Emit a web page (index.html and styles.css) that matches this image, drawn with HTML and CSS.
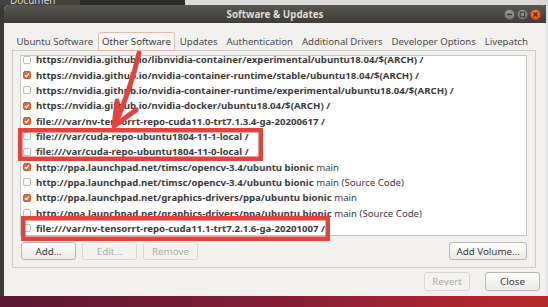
FILE: index.html
```html
<!DOCTYPE html>
<html>
<head>
<meta charset="utf-8">
<link rel="stylesheet" href="styles.css">
</head>
<body>
<div class="desktop">
  <div class="backdrop-top">
    <div class="bg-doc"><span class="doc-label">Documen</span></div>
    <div class="bg-dark"></div>
    <div class="bg-light"></div>
  </div>
  <div class="bg-left"></div>
  <div class="window">
    <div class="titlebar">
      <span class="title">Software &amp; Updates</span>
      <div class="controls">
        <span class="ctl"><svg width="7" height="7" viewBox="0 0 7 7"><path d="M1 3.5H6" stroke="#3c3b37" stroke-width="1.4"/></svg></span>
        <span class="ctl"><svg width="7" height="7" viewBox="0 0 7 7"><rect x="1.2" y="1.2" width="4.6" height="4.6" fill="none" stroke="#3c3b37" stroke-width="1.1"/></svg></span>
        <span class="ctl close"><svg width="7" height="7" viewBox="0 0 7 7"><path d="M1.5 1.5L5.5 5.5M5.5 1.5L1.5 5.5" stroke="#5a2210" stroke-width="1.3"/></svg></span>
      </div>
    </div>
    <div class="body">
      <div class="tabs">
        <span class="tab">Ubuntu Software</span>
        <span class="tab active">Other Software</span>
        <span class="tab">Updates</span>
        <span class="tab">Authentication</span>
        <span class="tab">Additional Drivers</span>
        <span class="tab">Developer Options</span>
        <span class="tab">Livepatch</span>
      </div>
      <div class="frame">
        <div class="list">
          <div class="rows">
            <div class="row"><span class="cb"></span><span class="label"><b>https://nvidia.github.io/libnvidia-container/experimental/ubuntu18.04/$(ARCH) /</b></span></div>
            <div class="row"><span class="cb on"><svg width="6" height="6" viewBox="0 0 6 6"><path d="M1 3.2L2.4 4.6L5 1.4" fill="none" stroke="#fff" stroke-width="1.3"/></svg></span><span class="label"><b>https://nvidia.github.io/nvidia-container-runtime/stable/ubuntu18.04/$(ARCH) /</b></span></div>
            <div class="row"><span class="cb"></span><span class="label"><b>https://nvidia.github.io/nvidia-container-runtime/experimental/ubuntu18.04/$(ARCH) /</b></span></div>
            <div class="row"><span class="cb on"><svg width="6" height="6" viewBox="0 0 6 6"><path d="M1 3.2L2.4 4.6L5 1.4" fill="none" stroke="#fff" stroke-width="1.3"/></svg></span><span class="label"><b>https://nvidia.github.io/nvidia-docker/ubuntu18.04/$(ARCH) /</b></span></div>
            <div class="row"><span class="cb on"><svg width="6" height="6" viewBox="0 0 6 6"><path d="M1 3.2L2.4 4.6L5 1.4" fill="none" stroke="#fff" stroke-width="1.3"/></svg></span><span class="label"><b>file:///var/nv-tensorrt-repo-cuda11.0-trt7.1.3.4-ga-20200617 /</b></span></div>
            <div class="row"><span class="cb"></span><span class="label"><b>file:///var/cuda-repo-ubuntu1804-11-1-local /</b></span></div>
            <div class="row"><span class="cb"></span><span class="label"><b>file:///var/cuda-repo-ubuntu1804-11-0-local /</b></span></div>
            <div class="row"><span class="cb on"><svg width="6" height="6" viewBox="0 0 6 6"><path d="M1 3.2L2.4 4.6L5 1.4" fill="none" stroke="#fff" stroke-width="1.3"/></svg></span><span class="label"><b>http://ppa.launchpad.net/timsc/opencv-3.4/ubuntu bionic</b> main</span></div>
            <div class="row"><span class="cb"></span><span class="label"><b>http://ppa.launchpad.net/timsc/opencv-3.4/ubuntu bionic</b> main (Source Code)</span></div>
            <div class="row"><span class="cb on"><svg width="6" height="6" viewBox="0 0 6 6"><path d="M1 3.2L2.4 4.6L5 1.4" fill="none" stroke="#fff" stroke-width="1.3"/></svg></span><span class="label"><b>http://ppa.launchpad.net/graphics-drivers/ppa/ubuntu bionic</b> main</span></div>
            <div class="row"><span class="cb"></span><span class="label"><b>http://ppa.launchpad.net/graphics-drivers/ppa/ubuntu bionic</b> main (Source Code)</span></div>
            <div class="row"><span class="cb"></span><span class="label"><b>file:///var/nv-tensorrt-repo-cuda11.1-trt7.2.1.6-ga-20201007 /</b></span></div>
          </div>
        </div>
        <div class="list-actions">
          <span class="btn">Add...</span>
          <span class="btn disabled">Edit...</span>
          <span class="btn disabled">Remove</span>
          <span class="spacer"></span>
          <span class="btn">Add Volume...</span>
        </div>
      </div>
      <div class="dialog-actions">
        <span class="btn dlg revert disabled">Revert</span>
        <span class="btn dlg close-btn">Close</span>
      </div>
    </div>
  </div>
  <div class="bg-right"></div>
  <div class="bg-bottom"></div>
  <svg class="annotations" width="548" height="307" viewBox="0 0 548 307">
    <rect x="20.25" y="130.25" width="240.5" height="28.5" fill="none" stroke="#e5413d" stroke-width="4.5"/>
    <rect x="23.25" y="218.25" width="304.5" height="20.5" fill="none" stroke="#e5413d" stroke-width="4.5"/>
    <path d="M139 53 Q131 88 115 125" fill="none" stroke="#e5413d" stroke-width="5" stroke-linecap="round"/>
    <path d="M117 101 L114 126 L136 110" fill="none" stroke="#e5413d" stroke-width="5" stroke-linecap="round" stroke-linejoin="round"/>
  </svg>
</div>
</body>
</html>
```

FILE: styles.css
```css
body {
  margin: 0;
}

.desktop {
  position: relative;
  width: 548px;
  height: 307px;
  overflow: hidden;
  display: grid;
  grid-template-columns: 4px 542px 2px;
  grid-template-rows: 5px 291px 11px;
  background: #3a3937;
  font-family: "Noto Sans", "DejaVu Sans", sans-serif;
}

.backdrop-top {
  grid-column: 1 / 4;
  display: flex;
}

.bg-doc {
  width: 80px;
  background: #42413e;
  overflow: hidden;
}

.doc-label {
  display: block;
  color: #d6d6d6;
  font-size: 10px;
  line-height: 10px;
  margin-top: -5px;
  padding-left: 10px;
}

.bg-dark {
  width: 105px;
  background: #2c2c2b;
}

.bg-light {
  flex: 1;
  background: #d9d9d8;
}

.bg-left {
  background: #3a3937;
}

.bg-right {
  background: #e2e2e2;
}

.bg-bottom {
  grid-column: 1 / 4;
  background: linear-gradient(90deg, #5c1833 0%, #7e1c36 45%, #a72530 80%, #b42a2c 100%);
}

.window {
  display: flex;
  flex-direction: column;
  border-radius: 5px 5px 0 0;
  overflow: hidden;
  background: #f2f1f0;
}

.titlebar {
  height: 18px;
  flex: none;
  display: grid;
  grid-template-columns: 1fr auto 1fr;
  align-items: center;
  background: linear-gradient(#56554f, #3e3d39);
}

.title {
  grid-column: 2;
  color: #dfdbd2;
  font-weight: 700;
  font-size: 9.8px;
}

.controls {
  grid-column: 3;
  justify-self: end;
  display: flex;
  gap: 2px;
  padding-right: 5px;
}

.ctl {
  width: 11px;
  height: 11px;
  border-radius: 50%;
  box-sizing: border-box;
  border: 1px solid #5e5d58;
  background: linear-gradient(#9c9a94, #7c7a75);
  display: grid;
  place-items: center;
}

.ctl.close {
  border-color: #b8431d;
  background: linear-gradient(#f47a4c, #e35426);
}

.body {
  flex: 1;
  display: flex;
  flex-direction: column;
  padding: 9px 6px 3px 8px;
}

.tabs {
  display: flex;
  height: 18px;
  margin-right: 4px;
  position: relative;
  z-index: 1;
}

.tab {
  display: flex;
  align-items: center;
  padding: 0 4.5px;
  font-size: 9.6px;
  color: #4a4a48;
  white-space: nowrap;
}

.tab.active {
  border: 1px solid #dcbcae;
  border-radius: 3px 3px 0 0;
  background: #f7f6f5;
  margin: 0 0 -1px 0;
  padding: 0 3.5px;
  color: #3c3c3c;
}

.frame {
  margin-right: 4px;
  border: 1px solid #cfcdc8;
  padding: 4px 8px 7px 7px;
  display: flex;
  flex-direction: column;
}

.list {
  height: 181px;
  box-sizing: border-box;
  border: 1px solid #c9c7c2;
  background: #ffffff;
  overflow: hidden;
}

.rows {
  margin-top: -4px;
}

.row {
  height: 15.35px;
  display: flex;
  align-items: center;
  gap: 5px;
  padding-left: 2px;
  font-size: 9.65px;
  color: #3c3c3c;
  white-space: nowrap;
}

.row b {
  font-weight: 700;
}

.cb {
  flex: none;
  width: 8px;
  height: 8px;
  box-sizing: border-box;
  border: 1px solid #bdbbb6;
  border-radius: 2px;
  background: #ffffff;
  display: grid;
  place-items: center;
}

.cb.on {
  border-color: #c9582f;
  background: #de6a3e;
}

.list-actions {
  display: flex;
  gap: 6px;
  margin-top: 6px;
  padding-left: 1px;
}

.spacer {
  flex: 1;
}

.btn {
  height: 18px;
  min-width: 55px;
  box-sizing: border-box;
  padding: 0 6px;
  border: 1px solid #b9b7b2;
  border-radius: 3px;
  background: linear-gradient(#fdfdfd, #ebeae8);
  display: flex;
  align-items: center;
  justify-content: center;
  font-size: 9.8px;
  color: #3c3c3c;
  white-space: nowrap;
}

.btn.disabled {
  color: #abaaa6;
  border-color: #d9d7d3;
  background: #f4f3f2;
}

.dialog-actions {
  display: flex;
  justify-content: flex-end;
  gap: 15px;
  margin-top: 4px;
}

.btn.dlg {
  height: 19px;
}

.btn.revert {
  width: 46px;
  min-width: 46px;
}

.btn.close-btn {
  width: 55px;
}

.annotations {
  position: absolute;
  left: 0;
  top: 0;
  pointer-events: none;
}
```
